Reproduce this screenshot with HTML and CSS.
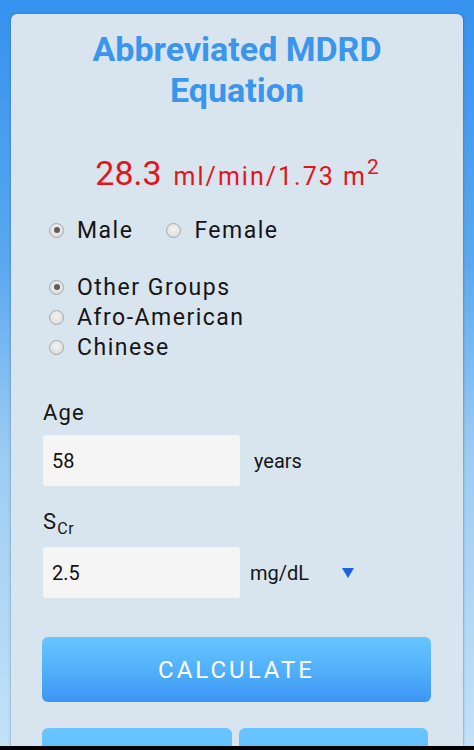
FILE: index.html
```html
<!DOCTYPE html>
<html>
<head>
<meta charset="utf-8">
<link rel="stylesheet" href="styles.css">
</head>
<body>
<div class="screen">
  <div class="card">
    <h1 class="title">Abbreviated MDRD<br>Equation</h1>
    <div class="result"><span class="big">28.3</span><span class="unit">ml/min/1.73 m<span class="sup">2</span></span></div>

    <div class="radios row">
      <label class="radio"><span class="dot checked"></span><span class="lbl">Male</span></label>
      <label class="radio"><span class="dot"></span><span class="lbl">Female</span></label>
    </div>

    <div class="radios col">
      <label class="radio"><span class="dot checked"></span><span class="lbl">Other Groups</span></label>
      <label class="radio"><span class="dot"></span><span class="lbl">Afro-American</span></label>
      <label class="radio"><span class="dot"></span><span class="lbl">Chinese</span></label>
    </div>

    <div class="field-label age-label">Age</div>
    <div class="field">
      <div class="input">58</div>
      <div class="suffix">years</div>
    </div>

    <div class="field-label scr-label">S<span class="sub">Cr</span></div>
    <div class="field">
      <div class="input">2.5</div>
      <div class="suffix unit-select">mg/dL</div>
      <span class="caret"></span>
    </div>

    <div class="calc">CALCULATE</div>
    <div class="bottom-btns">
      <div class="bbtn"></div>
      <div class="bbtn"></div>
    </div>
  </div>
  <div class="navbar"></div>
</div>
</body>
</html>
```

FILE: styles.css
```css
* { box-sizing: border-box; }
html, body { margin: 0; padding: 0; }
body {
  width: 474px;
  height: 750px;
  overflow: hidden;
  font-family: Roboto, "Noto Sans", sans-serif;
  background: #000;
}
.screen {
  width: 474px;
  height: 750px;
  overflow: hidden;
  display: flex;
  flex-direction: column;
  background: linear-gradient(to bottom, #3592ef 0%, #5aa8f0 35%, #9ccbf2 60%, #c4e2f8 100%);
}
.card {
  flex: 1;
  margin: 14px 11px 0;
  background: #d8e4ee;
  border-radius: 6px 6px 0 0;
  box-shadow: 1px 0 2px rgba(60, 90, 120, 0.35), -1px 0 2px rgba(60, 90, 120, 0.25);
  padding: 15px 0 0;
  overflow: hidden;
}
.navbar {
  height: 4px;
  background: #000;
  flex: none;
}
.title {
  margin: 0;
  text-align: center;
  font-size: 34px;
  line-height: 41px;
  font-weight: 700;
  color: #3a95ec;
}
.result {
  margin-top: 40px;
  text-align: center;
  color: #e3151a;
  line-height: 44px;
  height: 44px;
  white-space: nowrap;
}
.result .big { font-size: 34px; margin-right: 12px; }
.result .unit { font-size: 25px; letter-spacing: 2px; }
.result .sup {
  font-size: 21px;
  line-height: 0;
  vertical-align: 11px;
  letter-spacing: 0;
}
.radios { padding-left: 38px; }
.radios.row {
  display: flex;
  gap: 33px;
  margin-top: 20px;
}
.radios.col {
  display: flex;
  flex-direction: column;
  margin-top: 27px;
}
.radio {
  display: flex;
  align-items: center;
  height: 30px;
  font-size: 23px;
  letter-spacing: 1.5px;
  color: #151515;
}
.dot {
  width: 15px;
  height: 15px;
  border-radius: 50%;
  border: 1px solid #a8a8a8;
  background: radial-gradient(circle at 50% 40%, #f4f4f4 0%, #e2e2e2 60%, #cfcfcf 100%);
  margin-right: 13px;
  display: flex;
  align-items: center;
  justify-content: center;
  flex: none;
}
.dot.checked::after {
  content: "";
  width: 6px;
  height: 6px;
  border-radius: 50%;
  background: #5d5d5d;
}
.field-label {
  padding-left: 32px;
  font-size: 22px;
  letter-spacing: 1.2px;
  color: #151515;
  line-height: 30px;
}
.age-label { margin-top: 36px; }
.scr-label { margin-top: 21px; }
.sub {
  font-size: 16px;
  vertical-align: -5px;
  line-height: 0;
  letter-spacing: 0.5px;
}
.field {
  display: flex;
  align-items: center;
  padding-left: 32px;
  margin-top: 7px;
}
.scr-label + .field { margin-top: 10px; }
.input {
  width: 197px;
  height: 51px;
  background: #f5f5f5;
  border-radius: 3px;
  padding-left: 9px;
  display: flex;
  align-items: center;
  font-size: 20px;
  color: #111;
}
.suffix {
  margin-left: 14px;
  font-size: 20px;
  color: #151515;
}
.suffix.unit-select { margin-left: 10px; }
.caret {
  margin-left: 33px;
  width: 0;
  height: 0;
  border-left: 6px solid transparent;
  border-right: 6px solid transparent;
  border-top: 10px solid #1b63e3;
}
.calc {
  margin: 39px 32px 0 31px;
  height: 65px;
  border-radius: 6px;
  background: linear-gradient(to bottom, #67c6ff 0%, #52b0fb 50%, #3a96f4 100%);
  color: #fff;
  font-size: 24px;
  letter-spacing: 3px;
  display: flex;
  align-items: center;
  justify-content: center;
}
.bottom-btns {
  display: flex;
  gap: 7px;
  margin: 26px 35px 0 31px;
}
.bbtn {
  flex: 1;
  height: 60px;
  border-radius: 6px;
  background: linear-gradient(to bottom, #68c5ff, #5ab8fc);
}
```
